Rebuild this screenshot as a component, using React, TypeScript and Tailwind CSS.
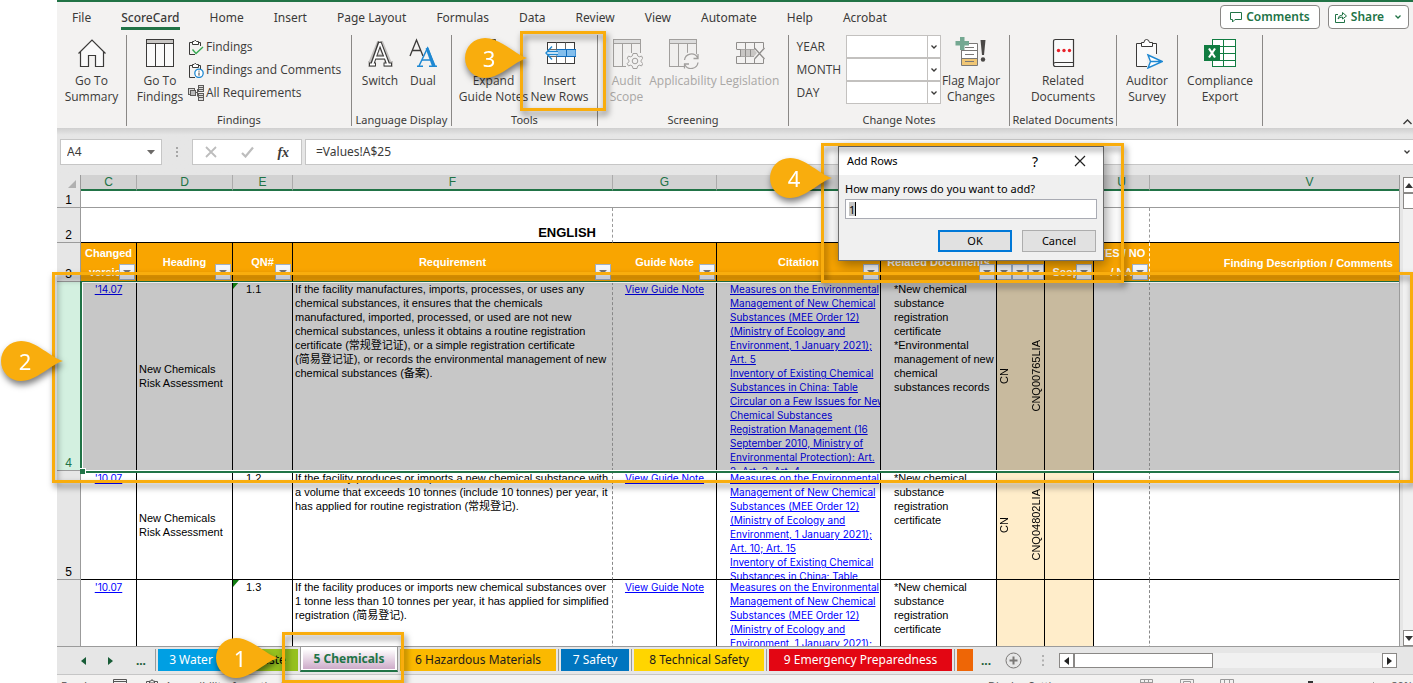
import type { ReactNode } from "react";
import clsx from "clsx";

const MENU = ["File", "ScoreCard", "Home", "Insert", "Page Layout", "Formulas", "Data", "Review", "View", "Automate", "Help", "Acrobat"];

const COLUMNS = [
  { letter: "C", width: "w-[56px]" },
  { letter: "D", width: "w-[96px]" },
  { letter: "E", width: "w-[60px]" },
  { letter: "F", width: "w-[320px]" },
  { letter: "G", width: "w-[104px]" },
  { letter: "", width: "w-[164px]" },
  { letter: "", width: "w-[116px]" },
  { letter: "", width: "w-[48px]" },
  { letter: "", width: "w-[49px]" },
  { letter: "U", width: "w-[56px]" },
  { letter: "V", width: "" },
];

const MEE_ORDER = [
  "Measures on the Environmental",
  "Management of New Chemical",
  "Substances (MEE Order 12)",
  "(Ministry of Ecology and",
  "Environment, 1 January 2021);",
];

const ROWS = [
  {
    number: 4,
    selected: true,
    flagged: true,
    height: "h-[188px]",
    version: "'14.07",
    heading: ["New Chemicals", "Risk Assessment"],
    question: "1.1",
    requirement: [
      "If the facility manufactures, imports, processes, or uses any",
      "chemical substances, it ensures that the chemicals",
      "manufactured, imported, processed, or used are not new",
      "chemical substances, unless it obtains a routine registration",
      "certificate (常规登记证), or a simple registration certificate",
      "(简易登记证), or records the environmental management of new",
      "chemical substances (备案).",
    ],
    citation: [
      ...MEE_ORDER,
      "Art. 5",
      "Inventory of Existing Chemical",
      "Substances in China: Table",
      "Circular on a Few Issues for New",
      "Chemical Substances",
      "Registration Management (16",
      "September 2010, Ministry of",
      "Environmental Protection): Art.",
      "2; Art. 3; Art. 4",
    ],
    documents: [
      "*New chemical",
      "substance",
      "registration",
      "certificate",
      "*Environmental",
      "management of new",
      "chemical",
      "substances records",
    ],
    country: "CN",
    code: "CNQ00765LIA",
  },
  {
    number: 5,
    selected: false,
    flagged: false,
    height: "h-[108px]",
    version: "'10.07",
    heading: ["New Chemicals", "Risk Assessment"],
    question: "1.2",
    requirement: [
      "If the facility produces or imports a new chemical substance with",
      "a volume that exceeds 10 tonnes (include 10 tonnes) per year, it",
      "has applied for routine registration (常规登记).",
    ],
    citation: [...MEE_ORDER, "Art. 10; Art. 15", "Inventory of Existing Chemical", "Substances in China: Table"],
    documents: ["*New chemical", "substance", "registration", "certificate"],
    country: "CN",
    code: "CNQ04802LIA",
  },
  {
    number: 6,
    selected: false,
    flagged: true,
    height: "h-[108px]",
    version: "'10.07",
    heading: [],
    question: "1.3",
    requirement: [
      "If the facility produces or imports new chemical substances over",
      "1 tonne less than 10 tonnes per year, it has applied for simplified",
      "registration (简易登记).",
    ],
    citation: MEE_ORDER,
    documents: ["*New chemical", "substance", "registration", "certificate"],
    country: "",
    code: "",
  },
];

const SHEETS = [
  { name: "3 Water", style: "w-[66px] bg-[#009fe3] text-white" },
  { name: "4 Waste", style: "w-[69px] bg-[#95c11f] text-black" },
  { name: "5 Chemicals", style: "" },
  { name: "6 Hazardous Materials", style: "w-[156px] bg-[#fbb900] text-[#1d1d1b]", joined: true },
  { name: "7 Safety", style: "w-[68px] bg-[#0075bf] text-white" },
  { name: "8 Technical Safety", style: "w-[130px] bg-[#ffd500] text-[#1d1d1b]" },
  { name: "9 Emergency Preparedness", style: "w-[183px] bg-[#e30613] text-white" },
];

function Lines({ items }: { items: string[] }) {
  return (
    <>
      {items.map((line) => (
        <span key={line} className="block whitespace-nowrap">
          {line}
        </span>
      ))}
    </>
  );
}

/* ---------- ribbon icons ---------- */

function Icon({ children, size = 32 }: { children: ReactNode; size?: number }) {
  return (
    <svg width={size} height={size} viewBox={`0 0 ${size} ${size}`} fill="none" stroke="#3b3a39" aria-hidden="true" className="shrink-0">
      {children}
    </svg>
  );
}

function HomeIcon() {
  return (
    <Icon>
      <path d="M4.500 15 V29.500 H12.500 V18.500 H19.500 V29.500 H27.500 V15 L16 4 Z" fill="#fafafa" stroke="none" />
      <path d="M2.500 16.500 L16 3 L29.500 16.500 M4.500 15 V29.500 H12.500 V18.500 H19.500 V29.500 H27.500 V15" strokeWidth="1.200" />
    </Icon>
  );
}

function ColumnsIcon({ muted }: { muted?: boolean }) {
  return (
    <>
      <rect x="2.500" y="2.500" width="27" height="27" fill={muted ? "#f0efee" : "#fafafa"} />
      <path d="M3 3 H29 V6.500 H3 Z" fill={muted ? "#dcdcdc" : "#c8c6c4"} stroke="none" />
      <path d="M2.500 6.500 H29.500 M11.500 6.500 V29.500 M20.500 6.500 V29.500" />
    </>
  );
}

function ClipboardIcon({ badge }: { badge: "check" | "info" }) {
  return (
    <Icon size={16}>
      <path d="M7 15.500 H1.500 V3.500 H4.500 M10 3.500 H12.500 V7" />
      <path d="M4.500 5.500 V2.500 H6 Q7.200 0 8.500 2.500 H10.500 V5.500 Z" fill="#fff" />
      {badge === "check" && <path d="M4.500 10.500 L8 14.500 L15 8" stroke="#36a852" strokeWidth="1.400" />}
      {badge === "info" && (
        <>
          <circle cx="11" cy="11.300" r="4.200" fill="#fff" stroke="#1e88d2" strokeWidth="1.300" />
          <path d="M11 10.500 V13.700 M11 8.600 V9.700" />
        </>
      )}
    </Icon>
  );
}

function TreeIcon() {
  return (
    <Icon size={16}>
      <g stroke="#5c5a58">
        <path d="M7 7.500 H10 M9.500 4 V11.500" />
        <rect x="0.500" y="3.500" width="6" height="6" fill="#ddd" />
        <rect x="2.500" y="5.500" width="5" height="5" fill="#bbb" />
        <rect x="10.500" y="0.500" width="5" height="6" fill="#ddd" />
        <rect x="10.500" y="8.500" width="5" height="7" fill="#ddd" />
        <path d="M11 2.500 H15 M11 4.500 H15 M11 10.500 H15 M11 12.500 H15" />
      </g>
    </Icon>
  );
}

function SwitchIcon() {
  return (
    <Icon>
      <path d="M16 5 L7 27 M16 5 L25 27 M10 20 H22 M4 27 H11 M20 27 H29" stroke="#c4c2c0" strokeWidth="6" />
      <path d="M16 5 L8 28 M15.500 5 L24.500 28 M11 20.500 H21 M5 27.500 H12 M19.500 27.500 H28" stroke="#3b3a39" strokeWidth="4" />
      <path d="M16 6 L8.500 27 M16 6 L24 27 M11 20.500 H21 M6 27.500 H11 M20.500 27.500 H27" stroke="#fff" strokeWidth="1.800" />
    </Icon>
  );
}

function DualIcon() {
  return (
    <Icon>
      <path d="M3 19 L9.500 3 L16 19 M5.500 13.500 H13.500" strokeWidth="1.300" />
      <path d="M12 29 L20.500 11 L28 29" stroke="#1e88d2" strokeWidth="1.500" />
      <path d="M20 11 L26.500 29" stroke="#1e88d2" strokeWidth="3" />
      <path d="M15 23 H25 M10 29.300 H16 M22 29.300 H30" stroke="#1e88d2" strokeWidth="1.500" />
    </Icon>
  );
}

function InsertRowsIcon() {
  return (
    <Icon>
      <rect x="3.500" y="5.500" width="27" height="21" fill="#fff" />
      <path d="M12.500 5.500 V26.500 M21.500 5.500 V26.500 M3.500 12.500 H30.500 M3.500 19.500 H30.500" stroke="#6b6967" />
      <path d="M13 12.500 H32 V19.500 H13 Z" fill="#83beec" stroke="#0f6cbd" />
      <path d="M22.500 12.500 V19.500" stroke="#0f6cbd" />
      <path d="M2 16 H14" stroke="#fff" strokeWidth="5" />
      <path d="M14 14.500 H3 M14 17.500 H3 M8 9.500 L2 16 L8 22.500" stroke="#1e88d2" strokeWidth="1.400" />
    </Icon>
  );
}

function ExpandIcon() {
  return (
    <Icon>
      <path d="M5.500 2.500 H17.500 V29.500 H5.500 Z" fill="#fafafa" />
    </Icon>
  );
}

function ScopeIcon() {
  return (
    <Icon>
      <g stroke="#a19f9d">
        <ColumnsIcon muted />
        <path d="M15 16 H31 V32 H15 Z" fill="#f3f2f1" stroke="none" />
        <path
          d="M22 16.500 h4 l.6 2.300 l1.700 1 l2.300-.7 l1.200 2.400 l-1.700 1.700 v1.600 l1.700 1.700 l-1.200 2.400 l-2.300-.7 l-1.700 1 l-.6 2.300 h-4 l-.6-2.300 l-1.700-1 l-2.300 .7 l-1.200-2.400 l1.700-1.700 v-1.600 l-1.700-1.700 l1.200-2.400 l2.300 .7 l1.700-1 Z"
          fill="#f3f2f1"
        />
        <circle cx="24" cy="24" r="2.800" />
      </g>
    </Icon>
  );
}

function ApplicabilityIcon() {
  return (
    <Icon>
      <g stroke="#a19f9d">
        <ColumnsIcon muted />
        <circle cx="24" cy="24" r="9" fill="#f3f2f1" stroke="none" />
        <path d="M17.500 23 A7 7 0 0 1 30.500 20.500 M31 17 V21.500 H26.500 M31 25.500 A7 7 0 0 1 18 28 M17.500 31.500 V27 H22" strokeWidth="1.300" />
      </g>
    </Icon>
  );
}

function LegislationIcon() {
  return (
    <Icon>
      <g stroke="#8f8d8b">
        <path d="M2.500 12 V5.500 H29.500 V11 M11.500 5.500 V12.500 M20.500 5.500 V12.500 M2.500 12.500 H20 M2.500 26.500 V19.500 H20 M2.500 26.500 H29.500 V22 M11.500 19.500 V26.500 M20.500 22 V26.500" />
        <path d="M6.500 12.500 H20 L23 16 L20 19.500 H6.500 Z" fill="#c8c6c4" stroke="none" />
        <path d="M6.500 12.500 V19.500 M11.500 12.500 V19.500 M16.500 12.500 V19.500" />
        <path d="M20.500 11 L30.500 22 M30.500 11 L20.500 22" strokeWidth="1.300" />
      </g>
    </Icon>
  );
}

function FlagIcon() {
  return (
    <Icon>
      <path d="M8 6.500 H22.500 V28.500 H6.500 V12" fill="#fff" stroke="#7a7876" />
      <path d="M7 21.500 H22 V28 H7 Z" fill="#f0c674" stroke="none" />
      <path d="M6.500 13.500 H22.500 M6.500 21.500 H22.500 M10 10.500 H19 M10 17.500 H19 M10 24.500 H19" stroke="#7a7876" />
      <path d="M5 0 H9.500 V4 H14 V8.500 H9.500 V13 H5 V8.500 H0.500 V4 H5 Z" fill="#74a892" stroke="none" />
      <path d="M25.500 3 H30.500 L29 18 H27 Z" fill="#4a4846" stroke="none" />
      <circle cx="28" cy="22.500" r="2.200" fill="#4a4846" stroke="none" />
    </Icon>
  );
}

function DocumentIcon() {
  return (
    <Icon>
      <path d="M6.500 28 V4.500 Q6.500 2.500 8.500 2.500 H26.500 V29.500 H8.500 Q6.500 29.500 6.500 27.500 Q6.500 25.500 8.500 25.500 H26.500" fill="#fafafa" strokeWidth="1.200" />
      <g fill="#e8222a" stroke="none">
        <circle cx="11.500" cy="13.500" r="1.700" />
        <circle cx="17" cy="13.500" r="1.700" />
        <circle cx="22.500" cy="13.500" r="1.700" />
      </g>
    </Icon>
  );
}

function SurveyIcon() {
  return (
    <Icon>
      <path d="M6 7 H25 V18 L16 17 V29 H6 Z" fill="#fafafa" stroke="none" />
      <path d="M16 29.500 H5.500 V6.500 H10 M22 6.500 H25.500 V17" />
      <path d="M10.500 9.500 V5.500 H13 Q13 2.500 15.500 2.500 Q18 2.500 18.500 5.500 H21.500 V9.500 Z" fill="#fff" />
      <path d="M17 18 L31.500 24.500 L17 31 L19.500 24.500 Z M19.500 24.500 H31" fill="#fff" stroke="#1e88d2" strokeWidth="1.400" />
    </Icon>
  );
}

function ExcelIcon() {
  return (
    <Icon>
      <rect x="8.500" y="2.500" width="23" height="27" fill="#fff" stroke="#107c41" />
      <path d="M19.500 2.500 V29.500 M8.500 9.500 H31.500 M8.500 16.500 H31.500 M8.500 23.500 H31.500" stroke="#107c41" />
      <rect x="0" y="8" width="16" height="16" fill="#107c41" stroke="none" />
      <path d="M5 11.500 L11 20.500 M11 11.500 L5 20.500" stroke="#fff" strokeWidth="2.200" />
    </Icon>
  );
}

function Chevron({ className }: { className?: string }) {
  return (
    <svg width="8" height="8" viewBox="0 0 8 8" fill="none" stroke="currentColor" strokeWidth="1.300" aria-hidden="true" className={className}>
      <path d="M1.500 2.500 L4 5 L6.500 2.500" />
    </svg>
  );
}

/* ---------- ribbon ---------- */

function Group({ width, label, children }: { width: string; label?: string; children: ReactNode }) {
  return (
    <section className={clsx("flex shrink-0 flex-col justify-between border-r border-[#8a8886]", width)}>
      <div className="flex justify-center">{children}</div>
      {label && <h2 className="text-center font-['Noto_Sans',sans-serif] text-[11px] leading-3 whitespace-nowrap">{label}</h2>}
    </section>
  );
}

function BigButton({ icon, lines, width, disabled }: { icon: ReactNode; lines: string[]; width: string; disabled?: boolean }) {
  return (
    <button type="button" disabled={disabled} className={clsx("flex flex-col items-center pt-0.5 leading-4 whitespace-nowrap disabled:text-[#a9a7a5]", width)}>
      {icon}
      <span className="flex flex-col items-center pt-1">
        {lines.map((line) => (
          <span key={line}>{line}</span>
        ))}
      </span>
    </button>
  );
}

function SmallButton({ icon, label }: { icon: ReactNode; label: string }) {
  return (
    <button type="button" className="flex h-[23px] items-center gap-0.5 whitespace-nowrap">
      {icon}
      {label}
    </button>
  );
}

function Combo({ id, label }: { id: string; label: string }) {
  return (
    <div className="flex h-[23px] items-center">
      <label htmlFor={id} className="w-[49px]">
        {label}
      </label>
      <div className="relative h-full w-[95px]">
        <select id={id} className="h-full w-full appearance-none border border-[#c3c1bf] bg-white" />
        <span className="pointer-events-none absolute inset-y-0 right-0 flex w-3.5 items-center justify-center border-x border-[#c3c1bf]">
          <Chevron />
        </span>
      </div>
    </div>
  );
}

function Ribbon() {
  return (
    <header className="border-t-2 border-[#217346] bg-[#f3f2f1] text-[12px] text-[#3b3a39]">
      <div className="flex h-[33px] items-start justify-between pr-1">
        <nav className="flex gap-[30px] pt-1.5 pl-[15px]">
          {MENU.map((item) => (
            <a
              key={item}
              href="#"
              className={clsx("h-[22px] leading-5 whitespace-nowrap", item === "ScoreCard" && "border-b-3 border-[#217346] font-medium")}
            >
              {item}
            </a>
          ))}
        </nav>
        <div className="flex gap-2 pt-[3px] font-semibold text-[#217346]">
          <button type="button" className="flex h-6 w-[100px] items-center justify-center gap-1 rounded border border-[#8a8886] bg-white">
            <svg width="12" height="12" viewBox="0 0 12 12" fill="none" stroke="currentColor" aria-hidden="true">
              <path d="M0.500 1.500 H11.500 V8.500 H5 L2.500 11 V8.500 H0.500 Z" />
            </svg>
            Comments
          </button>
          <button type="button" className="flex h-6 w-[81px] items-center justify-center gap-1 rounded border border-[#8a8886] bg-white">
            <svg width="12" height="12" viewBox="0 0 12 12" fill="none" stroke="currentColor" aria-hidden="true">
              <path d="M3 3.500 H0.500 V11.500 H9.500 V8.500 M3 8 Q3.500 4 7.500 4 V1.500 L11.500 5 L7.500 8 V6 Q4.500 6 3 8" />
            </svg>
            Share
            <Chevron className="ml-1.5" />
          </button>
        </div>
      </div>
      <div className="flex h-[93px] pb-0.5 font-['Open_Sans',sans-serif]">
        <Group width="w-[70px]">
          <BigButton width="w-[66px]" icon={<HomeIcon />} lines={["Go To", "Summary"]} />
        </Group>
        <Group width="w-[225px]" label="Findings">
          <BigButton
            width="w-[56px]"
            icon={
              <Icon>
                <ColumnsIcon />
              </Icon>
            }
            lines={["Go To", "Findings"]}
          />
          <div className="flex w-[158px] flex-col">
            <SmallButton icon={<ClipboardIcon badge="check" />} label="Findings" />
            <SmallButton icon={<ClipboardIcon badge="info" />} label="Findings and Comments" />
            <SmallButton icon={<TreeIcon />} label="All Requirements" />
          </div>
        </Group>
        <Group width="w-[100px]" label="Language Display">
          <BigButton width="w-[43px]" icon={<SwitchIcon />} lines={["Switch"]} />
          <BigButton width="w-[43px]" icon={<DualIcon />} lines={["Dual"]} />
        </Group>
        <Group width="w-[146px]" label="Tools">
          <BigButton width="w-[70px]" icon={<ExpandIcon />} lines={["Expand", "Guide Notes"]} />
          <BigButton width="w-[62px]" icon={<InsertRowsIcon />} lines={["Insert", "New Rows"]} />
        </Group>
        <Group width="w-[191px]" label="Screening">
          <BigButton disabled width="w-[46px]" icon={<ScopeIcon />} lines={["Audit", "Scope"]} />
          <BigButton disabled width="w-[67px]" icon={<ApplicabilityIcon />} lines={["Applicability"]} />
          <BigButton disabled width="w-[66px]" icon={<LegislationIcon />} lines={["Legislation"]} />
        </Group>
        <Group width="w-[221px]" label="Change Notes">
          <div className="flex flex-col">
            <Combo id="year" label="YEAR" />
            <Combo id="month" label="MONTH" />
            <Combo id="day" label="DAY" />
          </div>
          <BigButton width="w-[61px]" icon={<FlagIcon />} lines={["Flag Major", "Changes"]} />
        </Group>
        <Group width="w-[107px]" label="Related Documents">
          <BigButton width="w-[70px]" icon={<DocumentIcon />} lines={["Related", "Documents"]} />
        </Group>
        <Group width="w-[61px]">
          <BigButton width="w-[50px]" icon={<SurveyIcon />} lines={["Auditor", "Survey"]} />
        </Group>
        <Group width="w-[85px]">
          <BigButton width="w-[70px]" icon={<ExcelIcon />} lines={["Compliance", "Export"]} />
        </Group>
        <button type="button" aria-label="Collapse the ribbon" className="mt-auto ml-auto">
          <svg width="11" height="8" viewBox="0 0 11 8" fill="none" stroke="currentColor" strokeWidth="1.400">
            <path d="M1.500 6 L5.500 2 L9.500 6" />
          </svg>
        </button>
      </div>
    </header>
  );
}

function FormulaBar() {
  return (
    <div className="flex h-[47px] items-start bg-linear-to-b from-[#cfcfcf] to-[#e6e6e6] to-15% pt-[11px] pl-[3px] text-[12px] text-[#3b3a39]">
      <div className="flex h-[26px] w-[102px] items-center justify-between border border-[#c6c6c6] bg-white pr-1.5 pl-1.5">
        <input aria-label="Name box" defaultValue="A4" className="w-16 outline-none" />
        <svg width="8" height="5" viewBox="0 0 8 5" fill="#6b6967" aria-hidden="true">
          <path d="M0 0 H8 L4 4.500 Z" />
        </svg>
      </div>
      <svg width="30" height="26" viewBox="0 0 30 26" fill="#a6a6a6" aria-hidden="true">
        <path d="M14 8 h2 v2 h-2 Z M14 12 h2 v2 h-2 Z M14 16 h2 v2 h-2 Z" />
      </svg>
      <div className="flex h-[26px] w-[110px] items-center justify-around border border-[#c6c6c6] bg-white">
        <button type="button" aria-label="Cancel entry">
          <svg width="12" height="12" viewBox="0 0 12 12" stroke="#bdbdbd" strokeWidth="1.800">
            <path d="M1 1 L11 11 M11 1 L1 11" />
          </svg>
        </button>
        <button type="button" aria-label="Accept entry">
          <svg width="13" height="12" viewBox="0 0 13 12" fill="none" stroke="#bdbdbd" strokeWidth="2.200">
            <path d="M1 7 L4.500 10.500 L12 1.500" />
          </svg>
        </button>
        <button type="button" className="font-['Liberation_Serif',serif] text-[14px] font-bold italic">
          fx
        </button>
      </div>
      <div className="ml-[3px] flex h-[26px] flex-1 items-center border border-r-0 border-[#c6c6c6] bg-white pr-0.5 pl-2.5">
        <input aria-label="Formula" defaultValue="=Values!A$25" className="min-w-0 flex-1 outline-none" />
        <Chevron />
      </div>
    </div>
  );
}

/* ---------- sheet ---------- */

function FilterButton({ column }: { column: string }) {
  return (
    <button type="button" aria-label={`Filter ${column}`} className="flex size-4 shrink-0 items-center justify-center border border-[#9fb0c8] bg-[#f4f6fa]">
      <svg width="8" height="4" viewBox="0 0 8 4" fill="#777">
        <path d="M0 0 H8 L4 4 Z" />
      </svg>
    </button>
  );
}

function HeaderCell({ lines, edge = "border-black" }: { lines: string[]; edge?: string }) {
  return (
    <th className={clsx("border-r bg-[#f9a500] p-0", edge)}>
      <div className="relative flex h-[39px] flex-col justify-center overflow-hidden text-center leading-[19px]">
        <Lines items={lines} />
        <span className="absolute right-px bottom-0.5">
          <FilterButton column={lines.join(" ").trim()} />
        </span>
      </div>
    </th>
  );
}

function RowNumber({ children, selected }: { children: ReactNode; selected?: boolean }) {
  return (
    <th
      scope="row"
      className={clsx(
        "border-r border-b border-[#9b9b9b] p-0 align-bottom text-[12px] leading-[14px] font-normal",
        selected ? "bg-[#d3f0e0] text-[#217346]" : "bg-[#e6e6e6] text-black",
      )}
    >
      {children}
    </th>
  );
}

function BlankRow({ number, height, title, line }: { number: number; height: string; title?: string; line: string }) {
  return (
    <tr className={height}>
      <RowNumber>{number}</RowNumber>
      <td colSpan={4} className={clsx("border-b p-0 pr-4 text-right align-bottom text-[13px] leading-[18px] font-bold", line, title && "border-r border-r-[#999] [border-right-style:dashed]")}>
        {title}
      </td>
      <td colSpan={6} className={clsx("border-b", line, title && "border-r border-r-[#999] [border-right-style:dashed]")} />
      <td className={clsx("border-b", line)} />
    </tr>
  );
}

function Sheet() {
  return (
    <div className="relative flex min-h-0 flex-1 overflow-hidden bg-[#e6e6e6] font-['Liberation_Sans','Noto_Sans_CJK_SC',sans-serif] text-[11px] leading-[14px] text-black">
      <div className="relative h-full min-w-0 flex-1 overflow-hidden border-r border-[#9b9b9b]">
        <table className="w-full table-fixed border-separate border-spacing-0 bg-white">
          <colgroup>
            <col className="w-[24px]" />
            {COLUMNS.map((column, i) => (
              <col key={i} className={column.width} />
            ))}
          </colgroup>
          <thead>
            <tr className="h-4">
              <th className="border-r border-[#9b9b9b] bg-[#e6e6e6] p-0">
                <svg width="23" height="14" viewBox="0 0 23 14" fill="#b0b0b0" aria-hidden="true">
                  <path d="M19 4 V12 H11 Z" />
                </svg>
              </th>
              {COLUMNS.map((column, i) => (
                <th
                  key={i}
                  className={clsx(
                    "h-4 border-b-2 border-r-[#ababab] border-b-[#217346] bg-[#d2d2d2] p-0 text-[12px] font-normal text-[#217346]",
                    column.letter === "V" ? "pl-[70px]" : "border-r",
                  )}
                >
                  {column.letter}
                </th>
              ))}
            </tr>
          </thead>
          <tbody>
            <BlankRow number={1} height="h-[17px]" line="border-b-[#9b9b9b]" />
            <BlankRow number={2} height="h-[35px]" title="ENGLISH" line="border-b-black" />
            <tr className="text-[11px] text-white">
              <RowNumber>3</RowNumber>
              <HeaderCell lines={["Changed", "version"]} />
              <HeaderCell lines={["Heading"]} />
              <HeaderCell lines={["QN#"]} />
              <HeaderCell lines={["Requirement"]} edge="border-[#f9a500]" />
              <HeaderCell lines={["Guide Note"]} />
              <HeaderCell lines={["Citation"]} />
              <HeaderCell lines={["Related Documents"]} />
              <th className="border-r border-black bg-[#f9a500] p-0 align-bottom">
                <div className="flex justify-end overflow-hidden pb-0.5">
                  <FilterButton column="country" />
                  <FilterButton column="region" />
                  <FilterButton column="code" />
                </div>
              </th>
              <HeaderCell lines={["\u00a0", "Scope"]} />
              <HeaderCell lines={["YES / NO", "/ NA"]} edge="border-dashed border-white" />
              <th className="bg-[#f9a500] p-0 pr-1.5 text-right whitespace-nowrap">Finding Description / Comments</th>
            </tr>
            {ROWS.map((row) => {
              const fill = row.selected ? "bg-[#c7c7c7]" : "bg-white";
              const tint = row.selected ? "bg-[#c8ba9e]" : "bg-[#ffedca]";
              const link = clsx("font-['Inter',sans-serif] text-[10px] underline", row.selected ? "text-[#0000c8]" : "text-[#0000ff]");
              const cell = "border-r border-b border-black p-0 align-top";
              const dashed = "border-r border-b border-b-black border-r-[#888] p-0 align-top [border-right-style:dashed]";
              return (
                <tr key={row.number}>
                  <RowNumber selected={row.selected}>{row.number}</RowNumber>
                  <td className={clsx(cell, fill, "text-center")}>
                    <a href="#" className={link}>
                      {row.version}
                    </a>
                  </td>
                  <td className={clsx(cell, fill)}>
                    <div className={clsx("flex flex-col justify-center pl-0.5", row.height)}>
                      <Lines items={row.heading} />
                    </div>
                  </td>
                  <td className={clsx(cell, fill)}>
                    <div className="flex">
                      <svg width="13" height="7" viewBox="0 0 13 7" fill={row.flagged ? "#107c10" : "none"} aria-hidden="true">
                        <path d="M0 0 H6 L0 7 Z" />
                      </svg>
                      {row.question}
                    </div>
                  </td>
                  <td className={clsx(dashed, fill)}>
                    <div className="pl-0.5">
                      <Lines items={row.requirement} />
                    </div>
                  </td>
                  <td className={clsx(cell, fill, "text-center")}>
                    <a href="#" className={link}>
                      View Guide Note
                    </a>
                  </td>
                  <td className={clsx(cell, fill)}>
                    <div className={clsx("overflow-hidden pl-[13px]", row.height)}>
                      <a href="#" className={link}>
                        <Lines items={row.citation} />
                      </a>
                    </div>
                  </td>
                  <td className={clsx(cell, fill)}>
                    <div className="pl-[13px]">
                      <Lines items={row.documents} />
                    </div>
                  </td>
                  <td className={clsx(cell, tint)}>
                    <div className={clsx("flex items-center justify-between pr-px", row.height)}>
                      <span className="rotate-180 [writing-mode:vertical-rl]">{row.country}</span>
                      <span className="rotate-180 [writing-mode:vertical-rl]">{row.code}</span>
                    </div>
                  </td>
                  <td className={clsx(cell, tint)} />
                  <td className={clsx(dashed, fill)} />
                  <td className={clsx("border-b border-black", fill)} />
                </tr>
              );
            })}
          </tbody>
        </table>
        {/* selection frame around row 4 */}
        <div className="pointer-events-none absolute top-[106px] right-0 left-[23px] h-[192px] border-t border-b-2 border-l-2 border-[#217346]">
          <div className="h-full border border-r-0 border-white" />
          <span className="absolute -bottom-[3px] -left-0.5 size-[6px] border-t border-r border-white bg-[#217346]" />
        </div>
      </div>
      <div className="flex w-[13px] flex-col justify-between pt-0.5 pl-[3px]">
        <div className="bg-[#f1f1f1]">
          <button type="button" aria-label="Scroll up" className="flex h-4 w-full items-center justify-center border border-r-0 border-[#8a8886] bg-white">
            <svg width="8" height="5" viewBox="0 0 8 5" fill="#333">
              <path d="M0 5 H8 L4 0 Z" />
            </svg>
          </button>
          <div className="h-4 border border-r-0 border-[#8a8886] bg-white" />
        </div>
        <div className="flex-1 bg-[#f1f1f1]" />
        <button type="button" aria-label="Scroll down" className="flex h-4 w-full items-center justify-center border border-r-0 border-[#8a8886] bg-white">
          <svg width="8" height="5" viewBox="0 0 8 5" fill="#333">
            <path d="M0 0 H8 L4 5 Z" />
          </svg>
        </button>
      </div>
    </div>
  );
}

function ScrollButton({ label, path }: { label: string; path: string }) {
  return (
    <button type="button" aria-label={label} className="flex size-[15px] shrink-0 items-center justify-center border border-[#8a8886] bg-white">
      <svg width="5" height="8" viewBox="0 0 5 8" fill="#222">
        <path d={path} />
      </svg>
    </button>
  );
}

function SheetTabs() {
  return (
    <div className="flex h-[29px] shrink-0 items-start border-y border-t-[#9b9b9b] border-b-[#c6c6c6] bg-[#e6e6e6] text-[12px] text-[#185c37]">
      <div className="flex h-[27px] w-[96px] shrink-0 items-center justify-between pr-[7px] pl-6">
        <button type="button" aria-label="Previous sheet">
          <svg width="5" height="8" viewBox="0 0 5 8" fill="currentColor">
            <path d="M5 0 V8 L0 4 Z" />
          </svg>
        </button>
        <button type="button" aria-label="Next sheet">
          <svg width="5" height="8" viewBox="0 0 5 8" fill="currentColor">
            <path d="M0 0 V8 L5 4 Z" />
          </svg>
        </button>
        <button type="button" className="font-bold">
          ...
        </button>
      </div>
      <nav className="flex">
        {SHEETS.map((sheet) =>
          sheet.name === "5 Chemicals" ? (
            <button
              key={sheet.name}
              type="button"
              className="ml-0.5 h-[25px] w-[98px] shrink-0 border-x border-b-2 border-x-[#9b9b9b] border-b-[#217346] bg-white p-0.5 text-center font-bold whitespace-nowrap text-[#217346]"
            >
              <span className="block bg-linear-to-b from-white to-[#cdabc9] leading-5">{sheet.name}</span>
            </button>
          ) : (
            <div key={sheet.name} className="ml-0.5 flex pt-0.5">
              {!sheet.joined && <span className="mr-0.5 h-[22px] border-l border-[#9b9b9b]" />}
              <button type="button" className={clsx("h-[22px] shrink-0 text-center whitespace-nowrap", sheet.style)}>
                {sheet.name}
              </button>
            </div>
          ),
        )}
        <div className="ml-0.5 flex pt-0.5">
          <span className="mr-0.5 h-[22px] border-l border-[#9b9b9b]" />
          <button type="button" aria-label="Next sheet tab" className="h-[22px] w-4 bg-[#ee6606]" />
        </div>
      </nav>
      <div className="flex h-[27px] min-w-0 flex-1 items-center pl-2">
        <button type="button" className="font-bold">
          ...
        </button>
        <button type="button" aria-label="New sheet" className="ml-3.5">
          <svg width="17" height="17" viewBox="0 0 17 17" fill="none" stroke="#7a7876">
            <circle cx="8.500" cy="8.500" r="7.500" />
            <path d="M8.500 4.500 V12.500 M4.500 8.500 H12.500" strokeWidth="2" />
          </svg>
        </button>
        <svg width="3" height="12" viewBox="0 0 3 12" fill="#b0b0b0" aria-hidden="true" className="ml-5">
          <path d="M0 0 h2 v2 h-2 Z M0 4.500 h2 v2 h-2 Z M0 9 h2 v2 h-2 Z" />
        </svg>
        <div className="mr-4 ml-3.5 flex flex-1 bg-[#f1f1f1]">
          <ScrollButton label="Scroll left" path="M5 0 V8 L0 4 Z" />
          <div className="h-[15px] w-[139px] border border-[#8a8886] bg-white" />
          <span className="flex-1" />
          <ScrollButton label="Scroll right" path="M0 0 V8 L5 4 Z" />
        </div>
      </div>
    </div>
  );
}

function StatusBar() {
  return (
    <footer className="flex h-2 shrink-0 items-start justify-between overflow-hidden bg-[#f3f2f1] pl-1 text-[11px] leading-[22px] text-[#555]">
      <div className="flex items-start">
        <span className="w-[52px]">Ready</span>
        <svg width="14" height="8" viewBox="0 0 14 8" fill="none" stroke="#555" aria-hidden="true" className="mt-1">
          <path d="M0.500 8 V0.500 H13.500 V8 M0.500 2.500 H13.500" />
        </svg>
        <svg width="14" height="8" viewBox="0 0 14 8" fill="none" stroke="#555" aria-hidden="true" className="mt-1 ml-[18px]">
          <path d="M1.500 8 V2.500 H4 M12.500 8 V2.500 H10 M4.500 4 V2 H6 Q7 -1 8 2 H9.500 V4 Z" />
        </svg>
        <span className="ml-1.5">Accessibility: Investigate</span>
      </div>
      <div className="flex items-start">
        <span className="mr-14">Display Settings</span>
        <svg width="265" height="8" viewBox="0 0 265 8" fill="none" stroke="#999" aria-hidden="true" className="mt-1">
          <path d="M14.500 8 V0.500 H26.500 V8 M14.500 3.500 H26.500 M18.500 0.500 V8 M22.500 0.500 V8 M54.500 8 V0.500 H67.500 V8 M57.500 8 V2.500 H64.500 V8 M94.500 8 V0.500 H107.500 V8 M98.500 0.500 V8 M103.500 0.500 V8 M247.500 3 V8" />
          <path d="M182 2 h5 v6 h-5 Z" fill="#333" stroke="none" />
        </svg>
        <span>80%</span>
      </div>
    </footer>
  );
}

/* ---------- dialog and tutorial marks ---------- */

function AddRowsDialog() {
  return (
    <form
      role="dialog"
      aria-labelledby="add-rows-title"
      className="absolute top-[146px] left-[838px] w-[266px] border border-[#6e6e6e] bg-[#f0f0f0] text-[11px] text-black shadow-[2px_4px_12px_rgba(0,0,0,0.4)]"
    >
      <div className="flex h-7 items-center bg-white pr-[17px] pl-2">
        <h1 id="add-rows-title" className="flex-1">
          Add Rows
        </h1>
        <button type="button" className="mr-9 text-[14px]">
          ?
        </button>
        <button type="button" aria-label="Close">
          <svg width="12" height="12" viewBox="0 0 12 12" stroke="#222" strokeWidth="1.200">
            <path d="M1 1 L11 11 M11 1 L1 11" />
          </svg>
        </button>
      </div>
      <div className="px-1.5 pt-1.5 pb-2">
        <label htmlFor="row-count" className="block leading-4">
          How many rows do you want to add?
        </label>
        <div className="relative mt-0.5 h-5 border border-[#a9abb3] bg-white">
          <span className="absolute top-0.5 left-[3px] h-[14px] w-[7px] border-r border-black bg-[#c4c4c4]" />
          <input id="row-count" defaultValue="1" className="relative h-full w-full bg-transparent pl-[3px] outline-none" />
        </div>
        <div className="mt-[11px] flex justify-end gap-2.5 pr-px">
          <button type="submit" className="h-[22px] w-[74px] border-2 border-[#0078d7] bg-[#e1e1e1]">
            OK
          </button>
          <button type="button" className="h-[22px] w-[74px] border border-[#adadad] bg-[#e1e1e1]">
            Cancel
          </button>
        </div>
      </div>
    </form>
  );
}

function Frame({ className }: { className: string }) {
  return <div className={clsx("pointer-events-none absolute border-3 border-[#f9ad0d] drop-shadow-[2px_4px_3px_rgba(0,0,0,0.5)]", className)} />;
}

function Callout({ step, className }: { step: number; className: string }) {
  return (
    <div className={clsx("pointer-events-none absolute h-10 w-[62px] drop-shadow-[1px_4px_3px_rgba(0,0,0,0.5)]", className)}>
      <svg width="62" height="40" viewBox="0 0 62 40" fill="#f9ad0d" aria-hidden="true" className="absolute">
        <path d="M62 20 C50 17 36 0 20 0 A20 20 0 0 0 20 40 C36 40 50 23 62 20 Z" />
      </svg>
      <span className="relative block w-12 text-center text-[22px] leading-10 text-white">{step}</span>
    </div>
  );
}

export default function App() {
  return (
    <div className="relative h-screen overflow-hidden bg-white font-['Noto_Sans',sans-serif]">
      <main className="flex h-full flex-col pl-[57px]">
        <Ribbon />
        <FormulaBar />
        <Sheet />
        <SheetTabs />
        <StatusBar />
      </main>

      <AddRowsDialog />

      <Frame className="top-[632px] left-[282px] h-[51px] w-[122px]" />
      <Frame className="top-[272px] right-0 left-[52px] h-[211px]" />
      <Frame className="top-[31px] left-[520px] h-[80px] w-[86px]" />
      <Frame className="top-[143px] left-[821px] h-[140px] w-[303px]" />

      <Callout step={1} className="top-[638px] left-[216px]" />
      <Callout step={2} className="top-[341px] left-[1px]" />
      <Callout step={3} className="top-[38px] left-[465px]" />
      <Callout step={4} className="top-[158px] left-[770px]" />
    </div>
  );
}
